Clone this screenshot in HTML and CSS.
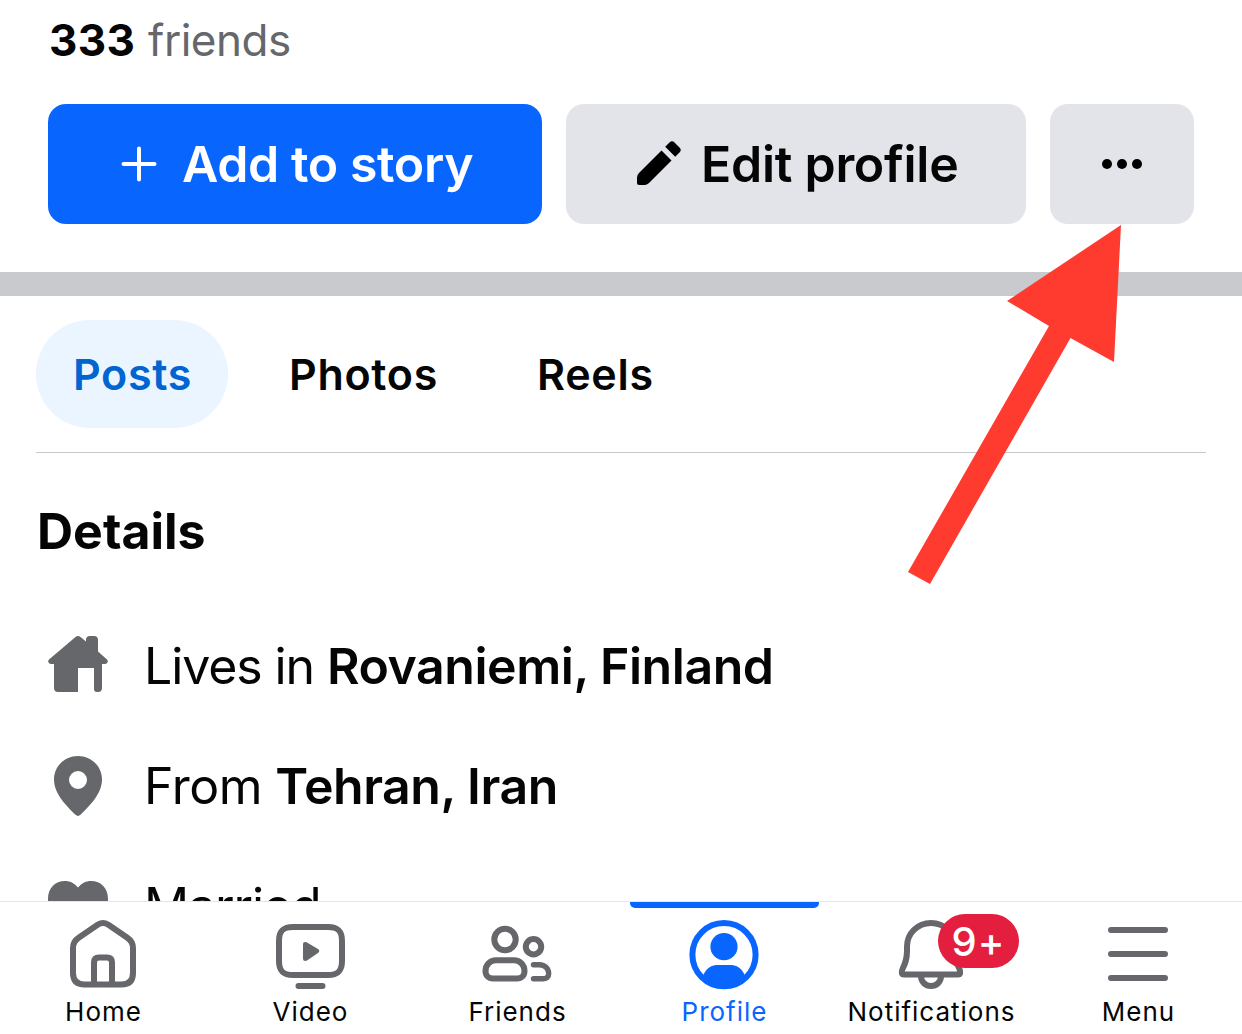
FILE: index.html
```html
<!DOCTYPE html>
<html lang="en">
<head>
    <meta charset="UTF-8">
    <title>Profile</title>
    <link rel="stylesheet" href="styles.css">
</head>
<body>

<div class="screen">
    <div class="header">
        <div class="friends"><b>333</b><span>friends</span></div>
        <div class="buttons">
            <a class="btn btn-primary">
                <svg class="icon-plus" viewBox="0 0 36 36"><path d="M18 2.500v31M2.500 18h31" fill="none" stroke="#fff" stroke-width="4" stroke-linecap="round"/></svg>
                <span>Add to story</span>
            </a>
            <a class="btn btn-edit">
                <svg class="icon-pencil" viewBox="0 0 44 44">
                    <path d="M24.500 9.500L34.500 19.500L12 42Q10 44 7.500 44H2Q0 44 0 42V36.500Q0 34 2 32Z"/>
                    <path d="M28.200 5.800L32.500 1.500Q35 -1 37.500 1.500L42.500 6.500Q45 9 42.500 11.500L38.200 15.800Z"/>
                </svg>
                <span>Edit profile</span>
            </a>
            <a class="btn btn-more">
                <svg class="icon-dots" viewBox="0 0 40 10"><circle cx="5" cy="5" r="5"/><circle cx="20" cy="5" r="5"/><circle cx="35" cy="5" r="5"/></svg>
            </a>
        </div>
    </div>

    <div class="tabs">
        <a class="tab active">Posts</a>
        <a class="tab">Photos</a>
        <a class="tab">Reels</a>
    </div>

    <div class="details">
        <h2>Details</h2>
        <div class="row">
            <svg class="row-icon" viewBox="0 2 60 60">
                <path d="M27.500 3Q30 1 32.500 3L38 7.500V6Q38 2 42 2H46Q50 2 50 6V17.500L59 25.500Q60.500 27 59.500 28.500Q58.500 30 56.500 30H54V54Q54 58 50 58H49Q46 58 46 55V34H30V58H10Q6 58 6 54V30H3.500Q1.500 30 .5 28.500Q-.5 27 1 25.500Z"/>
            </svg>
            <span class="tight">Lives in</span><b>Rovaniemi, Finland</b>
        </div>
        <div class="row">
            <svg class="row-icon" viewBox="0 0 60 60">
                <path fill-rule="evenodd" d="M30 0C43.500 0 54 10.500 54 23.500C54 38 41 50.500 32.500 58.800Q30 61 27.500 58.800C19 50.500 6 38 6 23.500C6 10.500 16.500 0 30 0ZM30 15A9 9 0 1 0 30 33A9 9 0 1 0 30 15Z"/>
            </svg>
            <span class="from">From</span><b>Tehran, Iran</b>
        </div>
        <div class="row">
            <svg class="row-icon" viewBox="0 0 60 60">
                <path d="M30 11.500C26 7 22 5 17 5C7 5 0 12 0 23C0 38 16 49 27 57Q30 59 33 57C44 49 60 38 60 23C60 12 53 5 43 5C38 5 34 7 30 11.500Z"/>
            </svg>
            <span class="tight">Married</span>
        </div>
    </div>

    <div class="nav">
        <a class="nav-item">
            <svg class="nav-icon" viewBox="0 0 72 72">
                <path d="M31 5.500Q36 2.500 41 5.500L60 18.500Q66 22.500 66 29V54Q66 65.500 54.500 65.500H17.500Q6 65.500 6 54V29Q6 22.500 12 18.500Z"/>
                <path d="M27 65V43.500Q27 38.500 32 38.500H40Q45 38.500 45 43.500V65"/>
            </svg>
            <span>Home</span>
        </a>
        <a class="nav-item">
            <svg class="nav-icon" viewBox="0 0 72 72">
                <path d="M19 8H54C64 8 68 12 68 22V42C68 52 64 56 54 56H19C9 56 5 52 5 42V22C5 12 9 8 19 8ZM24.500 67H48.500"/>
                <path class="solid" d="M29 25.500C29 23 31 22.500 33 23.500L44 30Q46.500 32 44 34L33 41.500C31 42.500 29 42 29 39.500Z"/>
            </svg>
            <span>Video</span>
        </a>
        <a class="nav-item">
            <svg class="nav-icon" viewBox="0 0 72 72">
                <circle cx="24" cy="20.500" r="10.700"/>
                <circle cx="52.500" cy="27.700" r="7.700"/>
                <path d="M15 41.300H33C39 41.300 43.500 46 43.500 52C43.500 56.500 40.500 59.500 36 59.500H12C7.500 59.500 4.500 56.500 4.500 52C4.500 46 9 41.300 15 41.300Z"/>
                <path class="thin" d="M52.500 45.700H58.500C64 45.700 67.700 50 67.700 54.500C67.700 58 65.500 59.800 62 59.800H52.500"/>
            </svg>
            <span>Friends</span>
        </a>
        <a class="nav-item current">
            <svg class="nav-icon" viewBox="0 0 72 72">
                <circle cx="36" cy="35.700" r="31.600"/>
                <circle class="solid" cx="36" cy="27.700" r="13.600"/>
                <path class="solid" d="M15 56.500C18 50 23 46 29 46H43C49 46 54 50 57 56.500C51 63 44 67 36 67C28 67 21 63 15 56.500Z"/>
            </svg>
            <span>Profile</span>
        </a>
        <a class="nav-item">
            <svg class="nav-icon" viewBox="0 0 72 72">
                <path d="M36 4C22.500 4 12 14.500 12 27.500V32C12 41 10 45 7.500 50Q5.500 55.500 9 55.500H63Q66.500 55.500 64.500 50C62 45 60 41 60 32V27.500C60 14.500 49.500 4 36 4Z"/>
                <path d="M26 57C26 63 30.500 67 36 67C41.500 67 46 63 46 57"/>
            </svg>
            <span class="badge">9+</span>
            <span>Notifications</span>
        </a>
        <a class="nav-item">
            <svg class="nav-icon" viewBox="0 0 72 72"><path d="M9 11H63M9 35H63M9 59H63"/></svg>
            <span>Menu</span>
        </a>
    </div>

    <!-- arrow pointing at the more button -->
    <svg class="arrow" viewBox="0 0 214 359"><path d="M213 0L206 137L162.500 113L22 359L0 347L141 101L99 76Z"/></svg>
</div>

</body>
</html>
```

FILE: styles.css
```css
* {
    box-sizing: border-box;
}

body {
    margin: 0;
    font-family: Inter, "Liberation Sans", sans-serif;
    color: #050505;
    background-color: #fff;
}

svg {
    flex: none;
    overflow: visible;
}

b {
    font-weight: 600;
}

.screen {
    position: relative;
    display: flex;
    flex-direction: column;
    width: 1242px;
    height: 1034px;
    overflow: hidden;
    white-space: nowrap;
}

.header {
    flex: none;
    height: 296px;
    padding: 13px 48px 0;
    border-bottom: 24px solid #c9cace;
}

.friends {
    display: flex;
    gap: 13px;
    height: 91px;
    padding-left: 1px;
    font-size: 44px;
    line-height: 54px;
}

.friends b {
    font-weight: 700;
    letter-spacing: 0.3px;
}

.friends span {
    color: #65676b;
    letter-spacing: -0.5px;
}

.buttons {
    display: flex;
    gap: 24px;
}

.btn {
    display: flex;
    align-items: center;
    height: 120px;
    border-radius: 18px;
    background-color: #e3e4e9;
    font-size: 50px;
    font-weight: 600;
}

.btn-primary {
    width: 494px;
    padding-left: 73px;
    gap: 25px;
    color: #fff;
    background-color: #0866ff;
    letter-spacing: -0.4px;
}

.btn-edit {
    width: 460px;
    padding-left: 71px;
    gap: 20px;
    letter-spacing: -0.27px;
}

.btn-more {
    width: 144px;
    justify-content: center;
}

.icon-plus {
    width: 36px;
    height: 36px;
}

.icon-pencil {
    width: 44px;
    height: 44px;
    margin-top: -2px;
}

.icon-dots {
    width: 40px;
    height: 10px;
}

.tabs {
    flex: none;
    display: flex;
    gap: 24px;
    height: 157px;
    margin: 0 36px;
    padding-top: 24px;
    border-bottom: 1px solid #c8c9cc;
}

.tab {
    height: 108px;
    padding: 0 38px 0 37px;
    border-radius: 54px;
    font-size: 43px;
    font-weight: 600;
    line-height: 108px;
    letter-spacing: 0.7px;
}

.tab.active {
    width: 192px;
    color: #0064d1;
    background-color: #ebf5ff;
}

.details {
    flex: 1;
    min-height: 0;
    overflow: hidden;
    padding: 48px 36px 0;
    font-size: 50px;
}

.details h2 {
    margin: 0 0 75px 1px;
    font-size: 50px;
    font-weight: 700;
    line-height: 60px;
}

.row {
    display: flex;
    align-items: center;
    height: 60px;
    margin-bottom: 60px;
    padding-left: 12px;
}

.row-icon {
    width: 60px;
    height: 60px;
    margin-right: 36px;
    fill: #65676b;
}

.row b {
    margin-left: 13px;
    letter-spacing: -0.45px;
}

.tight {
    letter-spacing: -1.1px;
}

.from {
    letter-spacing: -0.4px;
}

.nav {
    flex: none;
    display: flex;
    height: 133px;
    border-top: 1px solid #e4e5e7;
}

.nav-item {
    position: relative;
    display: flex;
    flex-direction: column;
    align-items: center;
    width: 207px;
    padding-top: 17px;
    font-size: 26px;
    line-height: 26px;
    letter-spacing: 1px;
}

.nav-icon {
    width: 72px;
    height: 72px;
    margin: 0 2px 8px 0;
    fill: none;
    stroke: #65676b;
    stroke-width: 6;
    stroke-linecap: round;
    stroke-linejoin: round;
}

.nav-icon .thin {
    stroke-width: 5.4;
}

.nav-icon .solid {
    fill: #65676b;
    stroke: none;
}

.current {
    color: #0866ff;
}

.current .nav-icon {
    stroke: #0866ff;
}

.current .solid {
    fill: #0866ff;
}

.current::before {
    content: "";
    position: absolute;
    top: 0;
    left: 9px;
    width: 189px;
    height: 6px;
    border-radius: 0 0 5px 5px;
    background-color: #0866ff;
}

.badge {
    position: absolute;
    top: 12px;
    left: 110px;
    width: 81px;
    height: 54px;
    border-radius: 27px;
    color: #fff;
    background-color: #e41e3f;
    font-size: 40px;
    font-weight: 500;
    line-height: 55px;
    text-align: center;
}

.arrow {
    position: absolute;
    top: 225px;
    left: 908px;
    width: 214px;
    height: 359px;
    fill: #ff3b30;
}
```
